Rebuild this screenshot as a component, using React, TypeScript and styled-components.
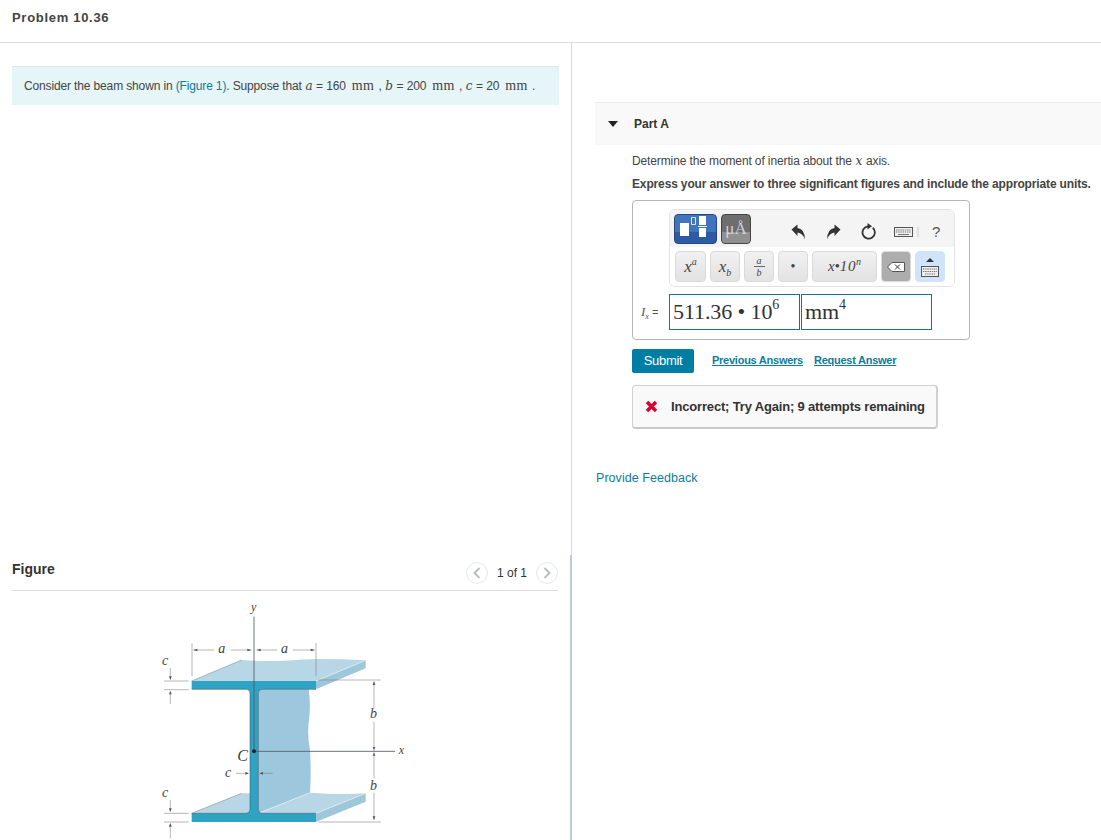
import React from 'react';
import styled, { createGlobalStyle } from 'styled-components';

const GlobalStyle = createGlobalStyle`
  html, body {
    margin: 0;
    padding: 0;
    height: 840px;
    overflow: hidden;
    background: #fff;
    font-family: "Liberation Sans", Arial, sans-serif;
    font-size: 12px;
    color: #333;
  }
`;

const Page = styled.div`
  width: 1101px;
  height: 840px;
  display: flex;
  flex-direction: column;
  overflow: hidden;
`;

const Header = styled.header`
  box-sizing: border-box;
  padding: 10px 12px 0;
  border-bottom: 1px solid #dcdcdc;
  flex: none;
  height: 43px;
`;

const Title = styled.h1`
  margin: 0;
  font-size: 13px;
  line-height: 15px;
  font-weight: 700;
  letter-spacing: 0.7px;
  color: #444;
`;

const Columns = styled.div`
  display: flex;
  flex: 1;
  min-height: 0;
`;

const LeftColumn = styled.section`
  width: 572px;
  flex: none;
  box-sizing: border-box;
  display: flex;
  flex-direction: column;
  border-right: 1px solid #d8d8d8;
`;

const Statement = styled.div`
  flex: none;
  height: 512px;
  box-sizing: border-box;
  padding: 23px 12px 0;
`;

const Callout = styled.div`
  height: 39px;
  box-sizing: border-box;
  background: #e6f5f7;
  border-top: 1px solid #dfe6e8;
  padding: 0 12px;
  display: flex;
  align-items: center;
  color: #444;
  letter-spacing: -0.14px;
`;

const CalloutText = styled.span`
  white-space: pre;
`;

const Link = styled.a`
  color: #0e7c9d;
  text-decoration: none;
`;

const MathVar = styled.i`
  font-family: "DejaVu Serif", "Liberation Serif", serif;
  font-size: 12px;
  font-style: italic;
  margin: 0 0.5px;
`;

const Unit = styled.span`
  font-family: "Liberation Serif", serif;
  font-size: 14px;
  letter-spacing: 0.35px;
  margin: 0 1px 0 6px;
`;

const FigurePanel = styled.div`
  flex: 1;
  min-height: 0;
  margin-right: -1px;
  border-right: 2px solid #b9cbdc;
  padding: 0 12px;
  box-sizing: border-box;
  overflow: hidden;
`;

const FigureHead = styled.div`
  height: 36px;
  box-sizing: border-box;
  display: flex;
  align-items: center;
  justify-content: space-between;
  border-bottom: 1px solid #dcdcdc;
`;

const FigureLabel = styled.strong`
  margin-bottom: 8px;
  font-size: 14px;
  font-weight: 700;
  color: #333;
`;

const Pager = styled.div`
  display: flex;
  align-items: center;
  gap: 9px;
  color: #333;
  font-size: 12px;
`;

const PagerButton = styled.span`
  width: 22px;
  height: 22px;
  box-sizing: border-box;
  border: 1px solid #e8e8e8;
  border-radius: 50%;
  display: flex;
  align-items: center;
  justify-content: center;
`;

const FigureArt = styled.svg`
  display: block;
  width: 280px;
  height: 240px;
  margin: 9px 0 0 128px;
`;

const RightColumn = styled.section`
  flex: 1;
  min-width: 0;
  box-sizing: border-box;
  padding: 59px 0 0 23px;
`;

const PartHeader = styled.div`
  height: 43px;
  box-sizing: border-box;
  background: #f9f9f9;
  border-top: 1px solid #ececec;
  display: flex;
  align-items: center;
  padding-left: 13px;
  gap: 16px;
  font-weight: 700;
  color: #333;
`;

const Caret = styled.span`
  width: 0;
  height: 0;
  border-left: 5px solid transparent;
  border-right: 5px solid transparent;
  border-top: 6px solid #222;
`;

const PartBody = styled.div`
  padding: 9px 0 0 37px;
`;

const Prompt = styled.p`
  margin: 0;
  line-height: 14px;
  color: #444;
  letter-spacing: -0.12px;
`;

const Instruction = styled.p`
  margin: 9px 0 0;
  line-height: 14px;
  font-weight: 700;
  color: #444;
  letter-spacing: -0.145px;
  white-space: nowrap;
`;

const AnswerBox = styled.div`
  width: 338px;
  height: 140px;
  box-sizing: border-box;
  margin-top: 9px;
  border: 1px solid #b5b5b5;
  border-radius: 4px;
  padding: 8px 0 0 36px;
`;

const Toolbar = styled.div`
  width: 286px;
  height: 78px;
  box-sizing: border-box;
  border: 1px solid #e2e2e2;
  border-radius: 6px;
  overflow: hidden;
`;

const TopTools = styled.div`
  height: 37px;
  box-sizing: border-box;
  background: #f4f4f4;
  display: flex;
  align-items: center;
  padding: 0 0 0 4px;
`;

const ModeButton = styled.span<{ $width: number; $tone: 'blue' | 'gray' }>`
  width: ${p => p.$width}px;
  height: 30px;
  margin: 1px 4px 0 0;
  box-sizing: border-box;
  border: 1px solid ${p => (p.$tone === 'blue' ? '#26477f' : '#444')};
  border-radius: 4px;
  background: ${p =>
    p.$tone === 'blue'
      ? 'linear-gradient(#4273bf 0 62%, #2d5aa5 62%)'
      : 'linear-gradient(#6e6e6e 0 62%, #909090 62%)'};
  display: flex;
  align-items: center;
  justify-content: center;
  color: #d4d4d4;
  font-family: "Liberation Serif", serif;
  font-size: 17px;
`;

const ToolIcon = styled.svg<{ $left: number }>`
  display: block;
  margin: 6px 0 0 ${p => p.$left}px;
  flex: none;
`;

const Help = styled.span`
  margin: 6px 0 0 13px;
  font-size: 15px;
  color: #555;
`;

const BottomTools = styled.div`
  height: 39px;
  display: flex;
  align-items: center;
  gap: 4px;
  padding: 0 0 0 5px;
  background: #fff;
`;

const KeyButton = styled.span<{ $width: number; $tone?: 'gray' | 'dark' | 'blue' }>`
  width: ${p => p.$width}px;
  height: 31px;
  box-sizing: border-box;
  border: 1px solid ${p => (p.$tone === 'blue' ? '#d2e4f7' : '#dadada')};
  border-radius: 4px;
  background: ${p =>
    p.$tone === 'dark'
      ? '#adadad'
      : p.$tone === 'blue'
        ? '#cfe4fb'
        : 'linear-gradient(#f1f1f1, #e2e2e2)'};
  display: flex;
  align-items: center;
  justify-content: center;
  font-family: "Liberation Serif", serif;
  font-size: 14px;
  color: #444;
  white-space: nowrap;
`;

const KeyLabel = styled.span<{ $size?: number }>`
  font-style: italic;
  font-size: ${p => p.$size ?? 14}px;
`;

const WideDigits = styled.span`
  letter-spacing: 0.6px;
`;

const KeySup = styled.sup`
  font-size: 10px;
  line-height: 0;
`;

const KeySub = styled.sub`
  font-size: 10px;
  line-height: 0;
`;

const Fraction = styled.span`
  display: flex;
  flex-direction: column;
  align-items: center;
  font-style: italic;
  font-size: 10px;
  line-height: 11px;
`;

const FractionBar = styled.span`
  width: 11px;
  height: 1px;
  background: #666;
`;

const InputRow = styled.div`
  display: flex;
  align-items: center;
  margin: 7px 0 0 -28px;
`;

const InputLabel = styled.span`
  width: 28px;
  flex: none;
  font-size: 11px;
  color: #555;
  white-space: nowrap;
`;

const LabelVar = styled.i`
  font-family: "Liberation Serif", serif;
  font-size: 13px;
`;

const LabelSub = styled.sub`
  font-size: 8px;
  line-height: 0;
  font-style: italic;
  font-family: "Liberation Serif", serif;
`;

const MathInput = styled.div<{ $width: number }>`
  width: ${p => p.$width}px;
  height: 36px;
  box-sizing: border-box;
  margin-right: 1px;
  border: 1px solid #1a7089;
  padding: 0 0 0 3px;
  display: flex;
  align-items: center;
  font-family: "Liberation Serif", serif;
  font-size: 22px;
  letter-spacing: -0.1px;
  color: #333;
  white-space: pre;
`;

const InputSup = styled.sup`
  font-size: 14px;
  line-height: 0;
  align-self: center;
  position: relative;
  top: -7px;
  vertical-align: baseline;
`;

const ActionRow = styled.div`
  display: flex;
  align-items: center;
  margin-top: 9px;
`;

const SubmitButton = styled.button`
  width: 62px;
  height: 24px;
  border: 0;
  border-radius: 2px;
  padding: 0 0 2px;
  background: #007da3;
  color: #fff;
  font-family: inherit;
  font-size: 13px;
  font-weight: 400;
  letter-spacing: -0.3px;
`;

const ActionLink = styled.a<{ $left: number }>`
  margin: 0 0 2px ${p => p.$left}px;
  color: #0e7c9d;
  font-size: 11px;
  font-weight: 700;
  text-decoration: underline;
  letter-spacing: -0.25px;
`;

const Feedback = styled.div`
  width: 306px;
  height: 44px;
  box-sizing: border-box;
  margin-top: 12px;
  background: #f9f9f9;
  border: 1px solid #d0d0d0;
  border-bottom: 2px solid #c8c8c8;
  border-right: 2px solid #d0d0d0;
  border-radius: 4px;
  display: flex;
  align-items: center;
  padding-left: 12px;
  gap: 13px;
  font-weight: 700;
  color: #333;
  font-size: 13px;
  letter-spacing: -0.17px;
`;

const FeedbackLink = styled.a`
  display: block;
  margin: 42px 0 0 1px;
  color: #0e7c9d;
  font-size: 12.5px;
  line-height: 15px;
  letter-spacing: 0.05px;
`;

const Keyboard = ({ left, w = 19, h = 10 }: { left: number; w?: number; h?: number }) => (
  <ToolIcon $left={left} width={w} height={h} viewBox="0 0 19 10">
    <rect x="0.5" y="0.5" width="18" height="9" fill="#eee" stroke="#555" />
    <path d="M2 3h15M2 5h15" stroke="#777" strokeDasharray="1.4 .8" />
    <path d="M4 7.5h11" stroke="#777" />
  </ToolIcon>
);

const Art = () => (
  <FigureArt viewBox="0 0 840 720">
    {/* top flange */}
    <path d="M155 243L305 180Q400 186 470 180T677 181L528 243Z" fill="#b7d7e6" />
    <path d="M528 243L677 181V205L528 268Z" fill="#9ec7da" />
    <path d="M155 243L305 180" stroke="#8a9aa3" strokeWidth="2" fill="none" />
    <path d="M528 243L677 181" stroke="#e6f2f7" strokeWidth="2" fill="none" />
    {/* web */}
    <path d="M355 268H506Q512 310 508 350Q500 400 510 450Q514 520 510 578L355 640Z" fill="#9cc7dc" />
    {/* bottom flange */}
    <path d="M155 640L305 580H330V640ZM355 640L510 578Q600 585 677 580L528 640Z" fill="#b7d7e6" />
    <path d="M528 640L677 580V605L528 666Z" fill="#9ec7da" />
    <path d="M155 640L305 580" stroke="#8a9aa3" strokeWidth="2" fill="none" />
    <path d="M355 640L510 578M528 640L677 580" stroke="#e6f2f7" strokeWidth="2" fill="none" />
    {/* section */}
    <path
      d="M155 243H528V268H366Q355 268 355 280V628Q355 640 366 640H528V666H155V640H318Q330 640 330 628V280Q330 268 318 268H155Z"
      fill="#2ea3c4"
    />
    <path d="M155 268H318Q330 268 330 280V628Q330 640 318 640H155M528 268H366Q355 268 355 280V628Q355 640 366 640H528" fill="none" stroke="#3b4a52" strokeWidth="1.5" />
    {/* axes */}
    <path d="M342 50V454H765" stroke="#4d5a62" strokeWidth="2.5" fill="none" />
    <circle cx="342" cy="454" r="6" fill="#222" />
    {/* dimensions */}
    <g stroke="#777" strokeWidth="1.6" fill="none">
      <path d="M156 130V228M528 130V228" />
      <path d="M160 150H222M272 150H334M350 150H412M458 150H524" />
      <path d="M72 243H146M72 269H146M91 204V238M91 275V312" />
      <path d="M72 640H146M72 666H146M91 600V634M91 672V715" />
      <path d="M535 240H722M535 666H722M702 244V325M702 365V535M702 578V660" />
      <path d="M288 520H324M360 520H398" />
    </g>
    <g fill="#555">
      <path d="M160 150l12-4v8zM334 150l-12-4v8zM350 150l12-4v8zM524 150l-12-4v8z" />
      <path d="M91 240l-4-11h8zM91 272l-4 11h8zM91 636l-4-11h8zM91 669l-4 11h8z" />
      <path d="M702 244l-4 11h8zM702 660l-4-11h8zM702 450l-4-9h8zM702 458l-4 9h8z" />
      <path d="M327 520l-11-4v8zM358 520l11-4v8z" />
    </g>
    <g fontFamily="'Liberation Serif', serif" fontStyle="italic" fill="#444" fontSize="42">
      <text x="235" y="160">a</text>
      <text x="423" y="160">a</text>
      <text x="66" y="196">c</text>
      <text x="66" y="590">c</text>
      <text x="690" y="355">b</text>
      <text x="690" y="570">b</text>
      <text x="255" y="532">c</text>
      <text x="292" y="482" fontSize="48">C</text>
      <text x="333" y="34" fontSize="36">y</text>
      <text x="776" y="462" fontSize="36">x</text>
    </g>
  </FigureArt>
);

export default function App() {
  return (
    <Page>
      <GlobalStyle />
      <Header>
        <Title>Problem 10.36</Title>
      </Header>
      <Columns>
        <LeftColumn>
          <Statement>
            <Callout>
              <CalloutText>
                Consider the beam shown in <Link>(Figure 1)</Link>. Suppose that <MathVar>a</MathVar> = 160
                <Unit>mm</Unit> , <MathVar>b</MathVar> = 200<Unit>mm</Unit> , <MathVar>c</MathVar> = 20
                <Unit>mm</Unit> .
              </CalloutText>
            </Callout>
          </Statement>
          <FigurePanel>
            <FigureHead>
              <FigureLabel>Figure</FigureLabel>
              <Pager>
                <PagerButton>
                  <svg width="8" height="12" viewBox="0 0 8 12">
                    <path d="M6.5 1L1.5 6l5 5" fill="none" stroke="#b5c0c8" strokeWidth="2" />
                  </svg>
                </PagerButton>
                1 of 1
                <PagerButton>
                  <svg width="8" height="12" viewBox="0 0 8 12">
                    <path d="M1.5 1l5 5-5 5" fill="none" stroke="#b5c0c8" strokeWidth="2" />
                  </svg>
                </PagerButton>
              </Pager>
            </FigureHead>
            <Art />
          </FigurePanel>
        </LeftColumn>
        <RightColumn>
          <PartHeader>
            <Caret />
            Part A
          </PartHeader>
          <PartBody>
            <Prompt>
              Determine the moment of inertia about the <MathVar>x</MathVar> axis.
            </Prompt>
            <Instruction>Express your answer to three significant figures and include the appropriate units.</Instruction>
            <AnswerBox>
              <Toolbar>
                <TopTools>
                  <ModeButton $width={43} $tone="blue">
                    <svg width="41" height="28" viewBox="1 1 41 28">
                      <path d="M6 9h9v13H6zM25 2h7v9h-7zM25 14h7v9h-7z" fill="#fff" />
                      <path d="M17.500 3.500h4v7h-4z" fill="none" stroke="#dfe8f5" />
                      <path d="M24 12.500h9" stroke="#fff" />
                    </svg>
                  </ModeButton>
                  <ModeButton $width={30} $tone="gray">μÅ</ModeButton>
                  <ToolIcon $left={36} width="15" height="16" viewBox="0 0 15 16">
                    <path d="M.5 5.500L6.500 .5V4q7 .5 7.500 11.500Q12 9.500 6.500 8.500v3.500z" fill="#333" />
                  </ToolIcon>
                  <ToolIcon $left={20} width="15" height="16" viewBox="0 0 15 16">
                    <path d="M14.500 5.500L8.500 .5V4Q1.500 4.500 1 15.500 3 9.500 8.500 8.500v3.500z" fill="#333" />
                  </ToolIcon>
                  <ToolIcon $left={20} width="16" height="17" viewBox="0 0 16 17">
                    <path d="M11.800 4.800A6.200 6.200 0 1 1 7 3.300" fill="none" stroke="#333" strokeWidth="1.8" />
                    <path d="M6.500 0v6.500L11 3.300z" fill="#333" />
                  </ToolIcon>
                  <Keyboard left={17} />
                  <ToolIcon $left={4} width="2" height="10" viewBox="0 0 2 10">
                    <path d="M1 0v10" stroke="#ccc" />
                  </ToolIcon>
                  <Help>?</Help>
                </TopTools>
                <BottomTools>
                  <KeyButton $width={31}>
                    <KeyLabel $size={17}>x<KeySup>a</KeySup></KeyLabel>
                  </KeyButton>
                  <KeyButton $width={30}>
                    <KeyLabel $size={17}>x<KeySub>b</KeySub></KeyLabel>
                  </KeyButton>
                  <KeyButton $width={30}>
                    <Fraction>
                      a<FractionBar />b
                    </Fraction>
                  </KeyButton>
                  <KeyButton $width={30}>•</KeyButton>
                  <KeyButton $width={65}>
                    <KeyLabel $size={15}>x•<WideDigits>10</WideDigits><KeySup>n</KeySup></KeyLabel>
                  </KeyButton>
                  <KeyButton $width={30} $tone="dark">
                    <svg width="18" height="10" viewBox="0 0 18 10">
                      <path d="M5 .5h12.500v9H5L.5 5z" fill="#fff" stroke="#555" />
                      <path d="M8 2.500l5 5M13 2.500l-5 5" stroke="#333" />
                    </svg>
                  </KeyButton>
                  <KeyButton $width={30} $tone="blue">
                    <svg width="18" height="20" viewBox="0 0 18 20">
                      <path d="M9 1l4 4H5z" fill="#333" />
                      <rect x=".5" y="9.500" width="17" height="10" fill="#eee" stroke="#555" />
                      <path d="M2 12h14M2 14.500h14M4 17h10" stroke="#777" strokeDasharray="1.400 .8" />
                    </svg>
                  </KeyButton>
                </BottomTools>
              </Toolbar>
              <InputRow>
                <InputLabel>
                  <LabelVar>I</LabelVar>
                  <LabelSub>x</LabelSub> =
                </InputLabel>
                <MathInput $width={131}>
                  511.36 • 10<InputSup>6</InputSup>
                </MathInput>
                <MathInput $width={131}>
                  mm<InputSup>4</InputSup>
                </MathInput>
              </InputRow>
            </AnswerBox>
            <ActionRow>
              <SubmitButton>Submit</SubmitButton>
              <ActionLink $left={18}>Previous Answers</ActionLink>
              <ActionLink $left={11}>Request Answer</ActionLink>
            </ActionRow>
            <Feedback>
              <svg width="13" height="13" viewBox="0 0 13 13">
                <path d="M2 2l9 9M11 2l-9 9" stroke="#d9002b" strokeWidth="3.400" />
              </svg>
              Incorrect; Try Again; 9 attempts remaining
            </Feedback>
          </PartBody>
          <FeedbackLink>Provide Feedback</FeedbackLink>
        </RightColumn>
      </Columns>
    </Page>
  );
}
